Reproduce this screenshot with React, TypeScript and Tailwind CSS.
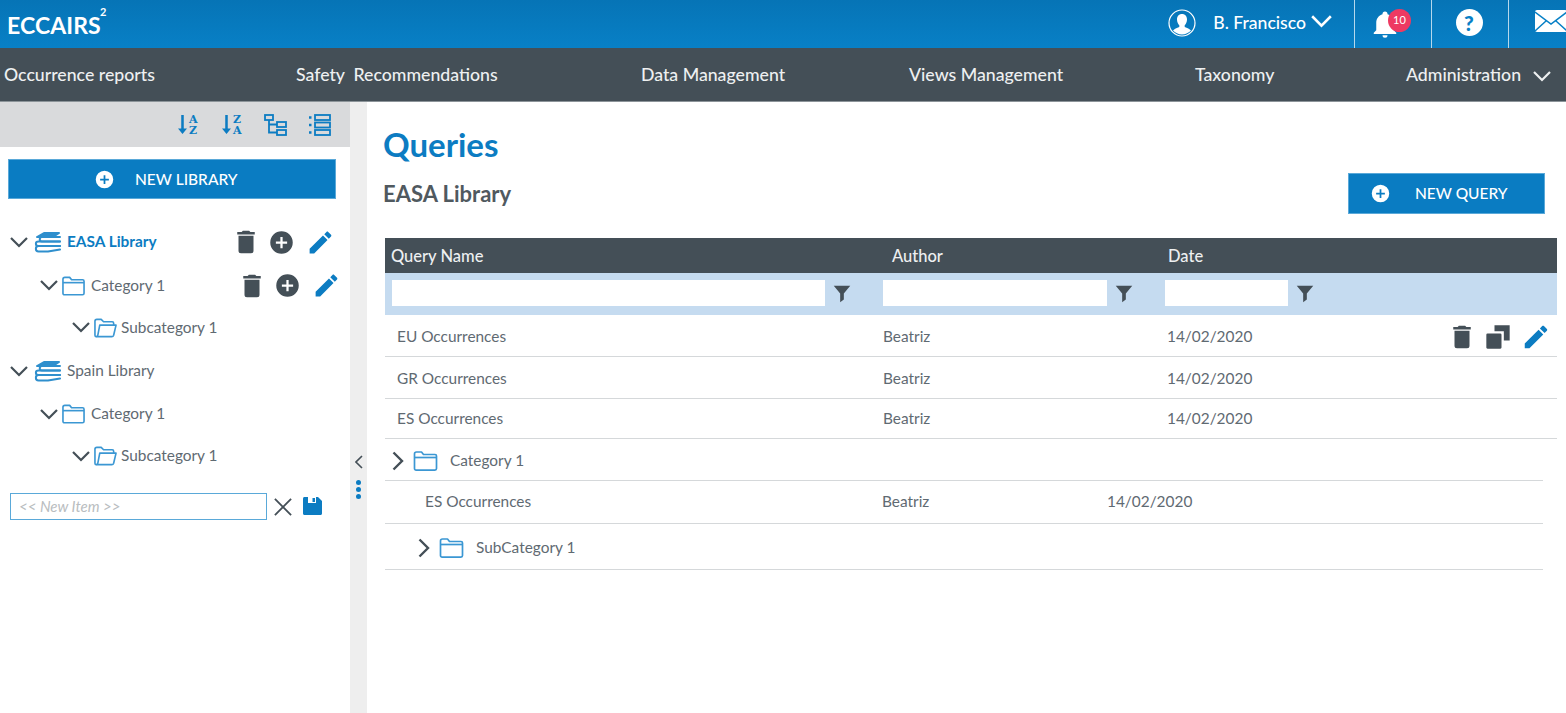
import React from "react";

type IP = { className?: string };
const Mdi = ({ d, className }: { d: string; className?: string }) => (
  <svg viewBox="0 0 24 24" fill="currentColor" className={className}><path d={d} /></svg>
);
const TRASH = "M19 4h-3.500l-1-1h-5l-1 1H5v2h14M6 19a2 2 0 0 0 2 2h8a2 2 0 0 0 2-2V7H6v12z";
const PENCIL = "M20.710 7.040c.390-.390.390-1.040 0-1.410l-2.340-2.340c-.370-.390-1.020-.390-1.410 0l-1.840 1.830 3.750 3.750M3 17.250V21h3.750L17.810 9.930l-3.750-3.750L3 17.250z";
const PLUS = "M17 13h-4v4h-2v-4H7v-2h4V7h2v4h4m-5-9A10 10 0 0 0 2 12a10 10 0 0 0 10 10 10 10 0 0 0 10-10A10 10 0 0 0 12 2z";
const FILTER = "M3 4h18l-7 8.500V19l-4 3v-9.500z";
const BELL = "M21 19v1H3v-1l2-2v-6c0-3.100 2.030-5.830 5-6.710V4a2 2 0 0 1 2-2 2 2 0 0 1 2 2v.29c2.970.88 5 3.610 5 6.710v6l2 2m-7 2a2 2 0 0 1-2 2 2 2 0 0 1-2-2";

const ChevDown = ({ className }: IP) => (
  <svg viewBox="0 0 18 11" fill="none" stroke="currentColor" strokeWidth="2.200" className={className}><path d="M1 1l8 8 8-8" /></svg>
);
const ChevRight = ({ className }: IP) => (
  <svg viewBox="0 0 12 20" fill="none" stroke="currentColor" strokeWidth="2.400" className={className}><path d="M1.500 1.500L10 10l-8.500 8.500" /></svg>
);
const Stack = ({ className }: IP) => (
  <svg viewBox="0 0 27 21" fill="none" stroke="currentColor" strokeWidth="2" strokeLinecap="round" strokeLinejoin="round" className={className}>
    <path d="M10 1h15l-6 4H3z" fill="currentColor" />
    <path d="M26 5H8C5 5 5 9.500 8 9.500h18" />
    <path d="M26 9.500H4.500C1 9.500 1 14 4.500 14H26" />
    <path d="M26 14H4.500C1 14 1 19.500 4.500 19.500H14l12-2" />
  </svg>
);
const Folder = ({ className }: IP) => (
  <svg viewBox="0 0 24 20" fill="none" stroke="currentColor" strokeWidth="1.700" strokeLinejoin="round" className={className}>
    <path d="M1 3C1 1.800 1.800 1 3 1h5l2 2.500h11.500c1 0 1.500.5 1.500 1.500v12.500c0 1-.7 1.600-1.600 1.600H2.600c-.9 0-1.600-.6-1.600-1.600z" />
    <path d="M1 6.500h22" />
  </svg>
);
const FolderOpen = ({ className }: IP) => (
  <svg viewBox="0 0 24 20" fill="none" stroke="currentColor" strokeWidth="1.700" strokeLinejoin="round" className={className}>
    <path d="M2.500 19C1.500 19 1 18.300 1 17.500V3c0-1.200.7-2 2-2h4.500L10 3.500h9c1 0 1.500.5 1.500 1.500v2" />
    <path d="M6 7h17l-2.500 10.500c-.3 1-.9 1.500-2 1.500H2.500c.8 0 1.300-.5 1.500-1.500z" />
  </svg>
);
const SortIcon = ({ top, bottom, className }: { top: string; bottom: string; className?: string }) => (
  <span className={`flex w-[21px] items-center text-[#0c7cc2] ${className ?? ""}`}>
    <svg viewBox="0 0 10 22" className="h-[22px] w-[9px] shrink-0" fill="currentColor"><path d="M3.600 0h2.800v15H10l-5 6-5-6h3.600z" /></svg>
    <span className="ml-[2px] flex flex-col text-[11px] leading-[11px] font-bold [font-family:'DejaVu_Serif',serif]">
      <span>{top}</span><span>{bottom}</span>
    </span>
  </span>
);
const TreeIcon = () => (
  <svg viewBox="0 0 23 22" fill="none" stroke="#0c7cc2" strokeWidth="1.800" className="h-[22px] w-[23px]">
    <rect x="1" y="1" width="8" height="5" /><rect x="13" y="8" width="9" height="5" /><rect x="13" y="16" width="9" height="5" />
    <path d="M5 6v12.500h8M5 10.500h8" />
  </svg>
);
const ListIcon = () => (
  <svg viewBox="0 0 23 22" fill="none" stroke="#0c7cc2" strokeWidth="1.800" className="h-[22px] w-[23px]">
    <rect x="7" y="1" width="15" height="5" /><rect x="7" y="8.500" width="15" height="5" /><rect x="7" y="16" width="15" height="5" />
    <path d="M1 3.500h2.500M1 11h2.500M1 18.500h2.500" strokeWidth="2.600" />
  </svg>
);
const Actions = ({ pr }: { pr: string }) => (
  <span className={`ml-auto flex items-center ${pr}`}>
    <Mdi d={TRASH} className="h-[30px] w-[30px] text-[#444f57]" />
    <Mdi d={PLUS} className="ml-[7px] h-[27px] w-[27px] text-[#444f57]" />
    <Mdi d={PENCIL} className="ml-[11px] h-[29px] w-[29px] text-[#0c7cc2]" />
  </span>
);

function TreeRow({ pl, icon, label, active, h, pr, pt }: { pl: string; icon: "stack" | "folder" | "open"; label: string; active?: boolean; h: string; pr?: string; pt?: string }) {
  return (
    <div className={`flex items-center ${h} ${pl} ${pt ?? ""}`}>
      <ChevDown className="h-[11px] w-[18px] shrink-0 text-[#444f57]" />
      {icon === "stack" && <Stack className="ml-[6px] h-[21px] w-[27px] shrink-0 text-[#2f8fcd]" />}
      {icon === "folder" && <Folder className="ml-[4px] h-[20px] w-[23px] shrink-0 text-[#3b97d3]" />}
      {icon === "open" && <FolderOpen className="ml-[4px] h-[20px] w-[23px] shrink-0 text-[#3b97d3]" />}
      <span className={`text-[15.400px] ${icon === "stack" ? "ml-[6px]" : icon === "folder" ? "ml-[6px]" : "ml-[4px]"} ${active ? "font-bold text-[#0c7cc2]" : "text-[#5f6a72]"}`}>{label}</span>
      {pr && <Actions pr={pr} />}
    </div>
  );
}

function Row({ name, author, date, h, actions, pt }: { name: string; author: string; date: string; h: string; actions?: boolean; pt?: string }) {
  return (
    <div className={`flex items-center border-b border-[#d5d8da] text-[15.400px] text-[#5f6a72] ${h} ${pt ?? ""}`}>
      <span className="w-[498px] pl-[12px]">{name}</span>
      <span className="w-[284px]">{author}</span>
      <span className="w-[200px]">{date}</span>
      {actions && (
        <span className="ml-auto flex items-center pr-[6px]">
          <Mdi d={TRASH} className="h-[30px] w-[30px] text-[#444f57]" />
          <svg viewBox="0 0 24 24" fill="#444f57" className="ml-[7px] h-[28px] w-[28px]"><path d="M9 2h13v13h-5V7H9z" /><rect x="2" y="9" width="13" height="13" rx="1" /></svg>
          <Mdi d={PENCIL} className="ml-[9px] h-[30px] w-[30px] text-[#0c7cc2]" />
        </span>
      )}
    </div>
  );
}

function GroupRow({ label, pl, h }: { label: string; pl: string; h: string }) {
  return (
    <div className={`flex w-[1158px] items-center border-b border-[#d5d8da] pt-[2px] text-[15.400px] text-[#5f6a72] ${h} ${pl}`}>
      <ChevRight className="h-[20px] w-[12px] text-[#444f57]" />
      <Folder className="ml-[9px] h-[20px] w-[25px] text-[#3b97d3]" />
      <span className="ml-[12px]">{label}</span>
    </div>
  );
}

const FilterCell = ({ w, input }: { w: string; input: string }) => (
  <div className={`flex items-center ${w}`}>
    <span className={`block h-[26px] bg-white ${input}`} />
    <Mdi d={FILTER} className="ml-[6px] h-[22px] w-[22px] text-[#444f57]" />
  </div>
);

export default function App() {
  return (
    <div className="flex h-[713px] w-[1566px] flex-col overflow-hidden bg-white [font-family:Lato,'Noto_Sans',sans-serif]">
      <header className="flex h-[48px] shrink-0 items-center bg-gradient-to-b from-[#0674b6] to-[#0880c6] text-white">
        <div className="relative ml-[7px] mt-[3px] text-[23px] leading-none font-bold tracking-[0.100px]">
          ECCAIRS<span className="absolute -top-[8px] left-[93px] text-[11px] font-bold">2</span>
        </div>
        <div className="ml-auto flex h-full items-center">
          <div className="flex items-center pb-[2px]">
            <svg viewBox="0 0 28 28" className="h-[28px] w-[28px]">
              <circle cx="14" cy="14" r="13" fill="none" stroke="white" strokeWidth="1.200" />
              <path fill="white" d="M14 5c3 0 5 2.200 5 5.500 0 2.500-1 4.500-2.300 5.700v1.800c2.500 1 5 2 6.300 3.500-2 2.300-5.500 4-9 4s-7-1.700-9-4c1.300-1.500 3.800-2.500 6.300-3.500v-1.800C10 15 9 13 9 10.500 9 7.200 11 5 14 5z" />
            </svg>
            <span className="ml-[17px] text-[17.600px] font-medium">B. Francisco</span>
            <ChevDown className="ml-[5px] mt-[-3px] h-[13px] w-[21px]" />
          </div>
          <div className="ml-[22px] flex h-full w-[77px] items-center border-l border-[#b6d8ec] pl-[15px]">
            <span className="relative block h-[30px] w-[30px]">
              <Mdi d={BELL} className="h-[30px] w-[30px]" />
              <span className="absolute top-0 left-[18px] flex h-[23px] w-[23px] items-center justify-center rounded-full bg-[#ee3a62] text-[11px]">10</span>
            </span>
          </div>
          <div className="flex h-full w-[77px] items-center justify-center border-l border-[#b6d8ec] pr-[2px]">
            <span className="mb-[4px] flex h-[27px] w-[27px] items-center justify-center rounded-full bg-white text-[21px] leading-none font-black text-[#0880c6]">?</span>
          </div>
          <div className="flex h-full w-[58px] items-center justify-start border-l border-[#b6d8ec] pl-[26px]">
            <svg viewBox="0 0 32 22" className="mb-[7px] h-[22px] w-[32px] shrink-0">
              <rect width="32" height="22" rx="2" fill="white" />
              <path d="M0 2l16 12L32 2M0 21l11-10M32 21L21 11" fill="none" stroke="#0880c6" strokeWidth="1.500" />
            </svg>
          </div>
        </div>
      </header>

      <nav className="flex h-[54px] shrink-0 items-center border-b border-[#8c9499] bg-[#444f57] pt-[2px] text-[17.700px] font-medium text-[#eef0f1]">
        <span className="ml-[4px] w-[292px]">Occurrence reports</span>
        <span className="w-[345px] whitespace-pre">Safety  Recommendations</span>
        <span className="w-[268px]">Data Management</span>
        <span className="w-[286px]">Views Management</span>
        <span className="w-[211px]">Taxonomy</span>
        <span>Administration</span>
        <ChevDown className="ml-[12px] mt-[2px] h-[11px] w-[18px]" />
      </nav>

      <div className="flex min-h-0 flex-1">
        <aside className="w-[350px] shrink-0">
          <div className="flex h-[45px] items-center justify-end gap-[21px] bg-[#d9dadc] pr-[19px]">
            <SortIcon top="A" bottom="Z" className="mr-[2px]" />
            <SortIcon top="Z" bottom="A" />
            <TreeIcon />
            <ListIcon />
          </div>
          <button className="mx-[8px] mt-[12px] flex h-[40px] w-[328px] items-center border border-[#5aa9d9] bg-[#0a7cc2] pl-[85px] text-[15.500px] font-medium text-white">
            <Mdi d={PLUS} className="h-[21px] w-[21px]" />
            <span className="ml-[20px] mt-[2px]">NEW LIBRARY</span>
          </button>
          <div className="mt-[20px]">
            <TreeRow h="h-[44px]" pt="pt-[2px]" pl="pl-[10px]" icon="stack" label="EASA Library" active pr="pr-[15px]" />
            <TreeRow h="h-[45px]" pl="pl-[40px]" icon="folder" label="Category 1" pr="pr-[9px]" />
            <TreeRow h="h-[39px]" pl="pl-[72px]" icon="open" label="Subcategory 1" />
            <TreeRow h="h-[46px]" pt="pt-[2px]" pl="pl-[10px]" icon="stack" label="Spain Library" />
            <TreeRow h="h-[40px]" pt="pt-[2px]" pl="pl-[40px]" icon="folder" label="Category 1" />
            <TreeRow h="h-[44px]" pt="pt-[2px]" pl="pl-[72px]" icon="open" label="Subcategory 1" />
          </div>
          <div className="mt-[16px] flex items-center pl-[10px]">
            <div className="flex h-[27px] w-[257px] items-center border-[1.500px] border-[#5aa9d9] pl-[8px] text-[15px] italic text-[#b9bdc0]">&lt;&lt; New Item &gt;&gt;</div>
            <svg viewBox="0 0 20 20" fill="none" stroke="#444f57" strokeWidth="2" className="ml-[7px] h-[18px] w-[18px]"><path d="M1 1l18 18M19 1L1 19" /></svg>
            <svg viewBox="0 0 19 18" className="ml-[11px] mb-[2px] h-[18px] w-[19px]">
              <path fill="#0c7cc2" d="M0 1.500C0 .6.6 0 1.500 0H15l4 4v12.500c0 .9-.6 1.500-1.500 1.500h-16C.6 18 0 17.400 0 16.500z" />
              <rect x="5" y="0" width="8" height="6" fill="white" />
              <rect x="9.500" y="1" width="2.500" height="4" fill="#0c7cc2" />
            </svg>
          </div>
        </aside>

        <div className="flex w-[17px] shrink-0 flex-col items-center bg-[#eeeeee] pt-[353px] text-[#444f57]">
          <svg viewBox="0 0 8 14" fill="none" stroke="currentColor" strokeWidth="1.600" className="h-[14px] w-[8px]"><path d="M7 1L1 7l6 6" /></svg>
          <span className="mt-[11px] flex flex-col gap-[2px]">
            <i className="block h-[5px] w-[5px] rounded-full bg-[#0c7cc2]" />
            <i className="block h-[5px] w-[5px] rounded-full bg-[#0c7cc2]" />
            <i className="block h-[5px] w-[5px] rounded-full bg-[#0c7cc2]" />
          </span>
        </div>

        <main className="min-w-0 flex-1 pl-[18px] pr-[9px]">
          <h1 className="-ml-[2px] mt-[22px] text-[33px] leading-[40px] font-bold text-[#0c7cc2]">Queries</h1>
          <div className="mt-[9px] flex h-[41px] items-start">
            <h2 className="-ml-[2px] mt-[7px] text-[22px] leading-[28px] font-bold text-[#50595f]">EASA Library</h2>
            <button className="ml-auto mr-[12px] flex h-[41px] w-[197px] items-center border border-[#5aa9d9] bg-[#0a7cc2] pl-[21px] text-[15.500px] font-medium text-white">
              <Mdi d={PLUS} className="h-[21px] w-[21px]" />
              <span className="ml-[24px]">NEW QUERY</span>
            </button>
          </div>
          <div className="mt-[24px] flex h-[35px] items-center bg-[#444f57] pt-[2px] text-[16.500px] font-medium text-[#eef0f1]">
            <span className="w-[507px] pl-[6px]">Query Name</span>
            <span className="w-[276px]">Author</span>
            <span>Date</span>
          </div>
          <div className="flex h-[42px] items-center bg-[#c5dbf0] pb-[2px] pl-[7px]">
            <FilterCell w="w-[491px]" input="w-[433px]" />
            <FilterCell w="w-[282px]" input="w-[224px]" />
            <FilterCell w="w-[160px]" input="w-[123px]" />
          </div>
          <Row h="h-[42px]" pt="pt-[2px]" name="EU Occurrences" author="Beatriz" date="14/02/2020" actions />
          <Row h="h-[42px]" pt="pt-[2px]" name="GR Occurrences" author="Beatriz" date="14/02/2020" />
          <Row h="h-[40px]" name="ES Occurrences" author="Beatriz" date="14/02/2020" />
          <GroupRow h="h-[42px]" pl="pl-[7px]" label="Category 1" />
          <div className="flex h-[43px] w-[1158px] items-center border-b border-[#d5d8da] text-[15.400px] text-[#5f6a72]">
            <span className="w-[497px] pl-[40px]">ES Occurrences</span>
            <span className="w-[225px]">Beatriz</span>
            <span>14/02/2020</span>
          </div>
          <GroupRow h="h-[46px]" pl="pl-[33px]" label="SubCategory 1" />
        </main>
      </div>
    </div>
  );
}
